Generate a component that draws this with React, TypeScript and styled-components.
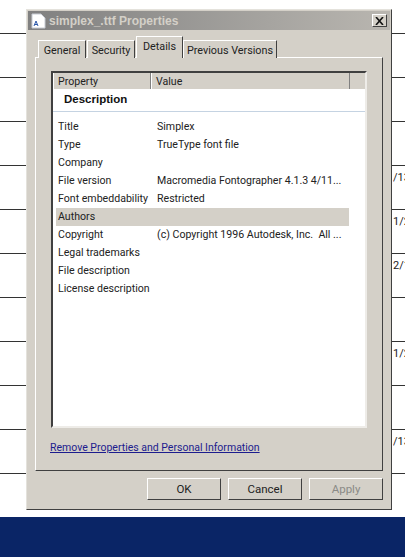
import styled, { createGlobalStyle } from "styled-components";

const GlobalStyle = createGlobalStyle`
    html, body {
        margin: 0;
        padding: 0;
        background: #fff;
        overflow: hidden;
    }
`

const Page = styled.div`
    position: relative;
    width: 405px;
    height: 557px;
    font-family: 'Roboto', 'Liberation Sans', Arial, sans-serif;
    font-size: 10.6px;
    color: #111;
    display: flex;
    flex-direction: column;
`

const Sheet = styled.div`
    height: 517px;
`

const SheetRow = styled.div`
    height: 44px;
    box-sizing: border-box;
    border-bottom: 1px solid #333;
    display: flex;
    justify-content: flex-end;
    padding-top: 5px;
    overflow: hidden;
    white-space: nowrap;

    &:first-child {
        height: 34px;
    }
`

const SheetDate = styled.span`
    width: 12px;
    overflow: hidden;
    font-size: 11px;
    line-height: 13px;
    color: #222;
`

const Footer = styled.div`
    flex: 1;
    background: #0a2566;
`

const Window = styled.div`
    position: absolute;
    left: 26px;
    top: 9px;
    width: 366px;
    height: 501px;
    box-sizing: border-box;
    background: #d4d0c8;
    border: 1px solid;
    border-color: #e4e2dc #404040 #404040 #e4e2dc;
    padding: 1px;
    display: flex;
    flex-direction: column;
`

const TitleBar = styled.div`
    height: 19px;
    background: linear-gradient(90deg, #808080, #b9b6b0);
    display: flex;
    align-items: center;
    padding: 0 3px;
    gap: 3px;
`

const TitleText = styled.span`
    flex: 1;
    font-family: 'Liberation Sans', Arial, sans-serif;
    font-weight: bold;
    font-size: 12px;
    color: #d4d0c8;
`

const CloseButton = styled.div`
    width: 15px;
    height: 13px;
    box-sizing: border-box;
    background: #d4d0c8;
    border: 1px solid;
    border-color: #fff #404040 #404040 #fff;
    display: flex;
    align-items: center;
    justify-content: center;
`

const Body = styled.div`
    flex: 1;
    display: flex;
    flex-direction: column;
    padding: 7px 7px 0 7px;
`

const TabStrip = styled.div`
    display: flex;
    height: 21px;
    align-items: flex-end;
    padding-left: 3px;
    position: relative;
    z-index: 1;
    margin-bottom: -1px;
`

const Tab = styled.div<{ $active?: boolean; $w: number }>`
    width: ${({ $w }) => $w}px;
    height: ${({ $active }) => ($active ? 22 : 18)}px;
    box-sizing: border-box;
    background: #d4d0c8;
    border: 1px solid;
    border-color: #fff #404040 transparent #fff;
    border-bottom: 0;
    text-align: center;
    white-space: nowrap;
    font-size: 10.8px;
    line-height: 19px;
    color: #222;
    margin-right: ${({ $active }) => ($active ? 0 : 1)}px;
`

const Panel = styled.div`
    height: 414px;
    box-sizing: border-box;
    border: 1px solid;
    border-color: #fff #404040 #404040 #fff;
    padding: 13px 15px 0 15px;
    display: flex;
    flex-direction: column;
`

const List = styled.div`
    height: 357px;
    box-sizing: border-box;
    background: #fff;
    border: 2px solid;
    border-color: #404040 #eeece8 #eeece8 #404040;
    display: flex;
    flex-direction: column;
`

const HeaderRow = styled.div`
    display: flex;
    height: 16px;
    background: #d4d0c8;
    line-height: 17px;
`

const HeaderCell = styled.div<{ $w: number }>`
    width: ${({ $w }) => $w}px;
    box-sizing: border-box;
    padding-left: 5px;
    border-right: 1px solid #808080;
    box-shadow: inset 1px 0 0 #fff;
    color: #222;
`

const GroupTitle = styled.div`
    height: 22px;
    line-height: 20px;
    padding-left: 11px;
    font-family: 'Liberation Sans', Arial, sans-serif;
    font-weight: bold;
    font-size: 11.5px;
    color: #111;
    border-bottom: 1px solid #c5d3e2;
    margin-bottom: 6px;
`

const Row = styled.div<{ $selected?: boolean }>`
    height: 18px;
    line-height: 18px;
    display: flex;
    margin: 0 16px 0 3px;
    padding-left: 2px;
    white-space: pre;
    background: ${({ $selected }) => ($selected ? "#d4d0c8" : "transparent")};
    color: #222;
`

const Label = styled.span`
    width: 99px;
    flex-shrink: 0;
`

const LinkRow = styled.a`
    margin-top: 13px;
    margin-left: -1px;
    color: #1c1c8e;
    text-decoration: underline;
    font-size: 10.5px;
    line-height: 14px;
`

const Actions = styled.div`
    display: flex;
    justify-content: flex-end;
    gap: 7px;
    margin-top: 7px;
`

const Button = styled.div<{ $disabled?: boolean }>`
    width: 74px;
    height: 22px;
    box-sizing: border-box;
    border: 1px solid;
    border-color: #fff #404040 #404040 #fff;
    text-align: center;
    font-size: 11.5px;
    line-height: 20px;
    color: ${({ $disabled }) => ($disabled ? "#8a8a86" : "#222")};
`

const dates = ["", "", "", "", "/13", "1/2", "2/1", "", "1/2", "", "/13"];
const rows: [string, string][] = [
    ["Title", "Simplex"],
    ["Type", "TrueType font file"],
    ["Company", ""],
    ["File version", "Macromedia Fontographer 4.1.3 4/11..."],
    ["Font embeddability", "Restricted"],
    ["Authors", ""],
    ["Copyright", "(c) Copyright 1996 Autodesk, Inc.  All ..."],
    ["Legal trademarks", ""],
    ["File description", ""],
    ["License description", ""],
];

const App = () => {
    return (
        <Page>
            <GlobalStyle />
            <Sheet>
                {dates.map((d, i) => (
                    <SheetRow key={i}>
                        <SheetDate>{d}</SheetDate>
                    </SheetRow>
                ))}
            </Sheet>
            <Footer />
            <Window>
                <TitleBar>
                    <svg width="15" height="16" viewBox="0 0 15 16">
                        <path d="M1 1h9l4 4v10H1z" fill="#fff" stroke="#c8ccd4" />
                        <path d="M3 13l2-5 2 5M3.8 11.5h2.4" fill="none" stroke="#2a56a8" strokeWidth="1" />
                    </svg>
                    <TitleText>simplex_.ttf Properties</TitleText>
                    <CloseButton>
                        <svg width="9" height="8" viewBox="0 0 9 8">
                            <path d="M1 0l7 8M8 0L1 8" stroke="#111" strokeWidth="1.6" />
                        </svg>
                    </CloseButton>
                </TitleBar>
                <Body>
                    <TabStrip>
                        <Tab $w={48}>General</Tab>
                        <Tab $w={48}>Security</Tab>
                        <Tab $w={47} $active>Details</Tab>
                        <Tab $w={94}>Previous Versions</Tab>
                    </TabStrip>
                    <Panel>
                        <List>
                            <HeaderRow>
                                <HeaderCell $w={98}>Property</HeaderCell>
                                <HeaderCell $w={199}>Value</HeaderCell>
                            </HeaderRow>
                            <GroupTitle>Description</GroupTitle>
                            {rows.map(([k, v]) => (
                                <Row key={k} $selected={k === "Authors"}>
                                    <Label>{k}</Label>
                                    <span>{v}</span>
                                </Row>
                            ))}
                        </List>
                        <LinkRow>Remove Properties and Personal Information</LinkRow>
                    </Panel>
                    <Actions>
                        <Button>OK</Button>
                        <Button>Cancel</Button>
                        <Button $disabled>Apply</Button>
                    </Actions>
                </Body>
            </Window>
        </Page>
    )
}

export default App;
